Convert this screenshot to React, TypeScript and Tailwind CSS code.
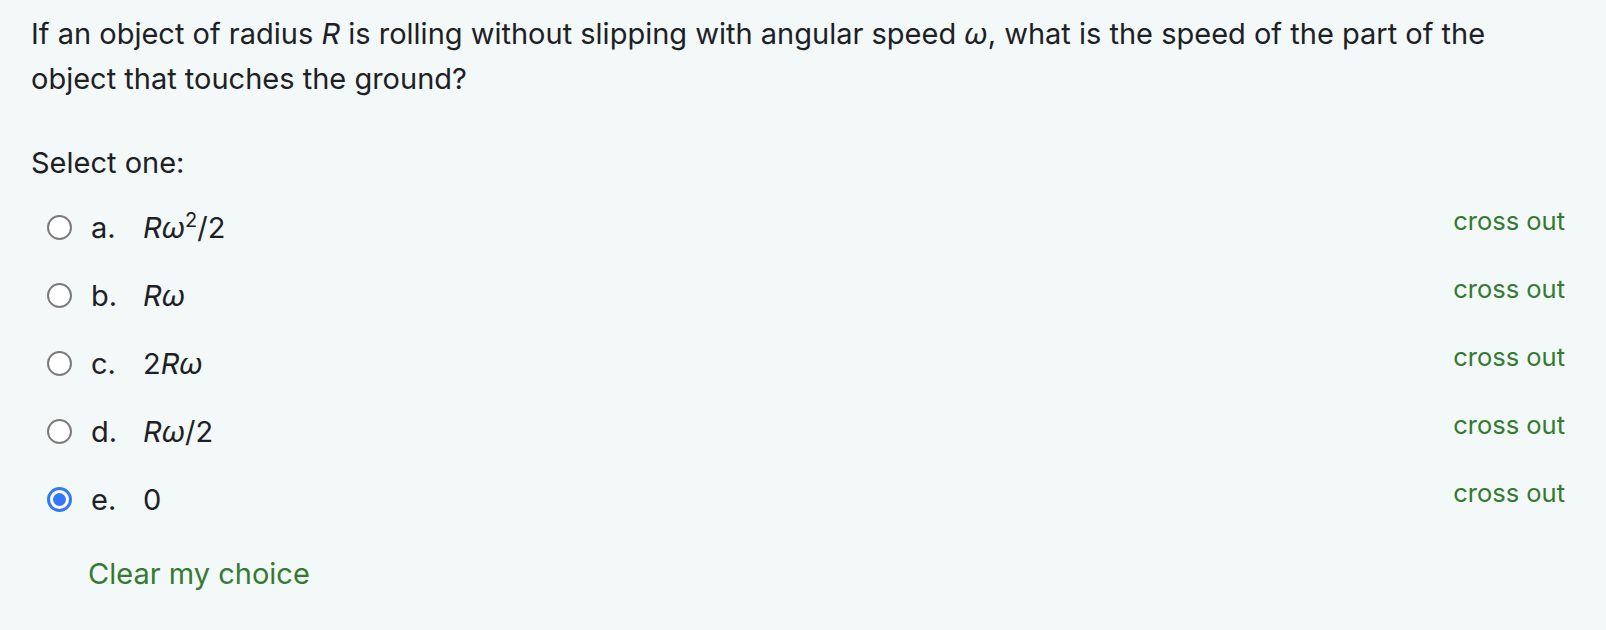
import React, { useState } from "react";

interface Choice {
  letter: string;
  answer: React.ReactNode;
}

const choices: Choice[] = [
  {
    letter: "a.",
    answer: (
      <>
        <i>Rω</i>
        <sup className="text-[20px] -top-[11px]">2</sup>/2
      </>
    ),
  },
  { letter: "b.", answer: <i>Rω</i> },
  {
    letter: "c.",
    answer: (
      <>
        2<i>Rω</i>
      </>
    ),
  },
  {
    letter: "d.",
    answer: (
      <>
        <i>Rω</i>/2
      </>
    ),
  },
  { letter: "e.", answer: <>0</> },
];

const Radio: React.FC<{ checked: boolean }> = ({ checked }) =>
  checked ? (
    <span className="w-[25px] h-[25px] rounded-full border-[3px] border-[#3478f6] bg-white flex items-center justify-center shrink-0">
      <span className="w-[13px] h-[13px] rounded-full bg-[#3478f6]" />
    </span>
  ) : (
    <span className="w-[25px] h-[25px] rounded-full border-2 border-[#7b7b7b] bg-white shrink-0" />
  );

const App: React.FC = () => {
  const [selected, setSelected] = useState<number | null>(4);

  return (
    <div className="min-h-[630px] bg-[#f3f8f8] text-[#1d2125] font-['Inter',sans-serif] pl-[31px] pr-[41px] pt-[11px]">
      <p className="text-[29px] leading-[45px]">
        If an object of radius <i>R</i> is rolling without slipping with angular speed <i>ω</i>, what is the speed
        of the part of the object that touches the ground?
      </p>

      <p className="mt-[39px] text-[29px] leading-[45px]">Select one:</p>

      <div className="mt-[20px] flex flex-col gap-[23px]">
        {choices.map((c, i) => (
          <div key={c.letter} className="flex items-start">
            <button
              type="button"
              onClick={() => setSelected(i)}
              className="h-[45px] ml-[16px] mr-[19px] flex items-center"
            >
              <Radio checked={selected === i} />
            </button>
            <span className="w-[52px] text-[29px] leading-[45px]">{c.letter}</span>
            <span className="text-[29px] leading-[45px]">{c.answer}</span>
            <button type="button" className="ml-auto text-[25.5px] leading-[32px] text-[#357a32]">
              cross out
            </button>
          </div>
        ))}
      </div>

      <button
        type="button"
        onClick={() => setSelected(null)}
        className="mt-[29px] ml-[57px] text-[29px] leading-[45px] text-[#357a32]"
      >
        Clear my choice
      </button>
    </div>
  );
};

export default App;
